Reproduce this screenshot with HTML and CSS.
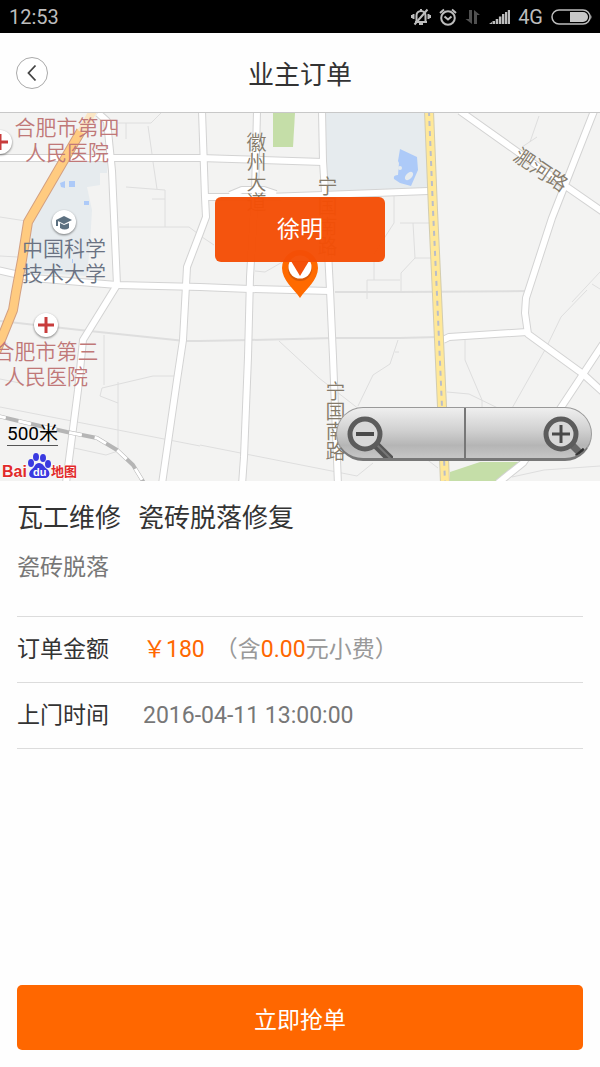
FILE: index.html
```
<!DOCTYPE html>
<html lang="zh-CN">
<head>
    <meta charset="UTF-8">
    <meta name="viewport" content="width=device-width, initial-scale=1.0">
    <title>业主订单</title>
    <link rel="stylesheet" href="styles.css">
</head>
<body>
    <div class="status-bar">
        <span class="status-time">12:53</span>
        <div class="status-icons">
            <svg class="icon-bell" width="20" height="18" viewBox="0 0 20 18" fill="none" stroke="#bdbdbd" stroke-width="2">
                <path d="M4 14h12M5.500 13.500V7.500a4.500 4.500 0 0 1 9 0v6M8 16h4M10 1v2"/>
                <path d="M2.500 6v5M.800 7v3M17.500 6v5M19.200 7v3M3.500 16.500L16.500 1.500"/>
            </svg>
            <svg class="icon-alarm" width="18" height="18" viewBox="0 0 18 18" fill="none" stroke="#bdbdbd" stroke-width="2">
                <circle cx="9" cy="10" r="6.800"/>
                <path d="M5.500 8.500L9 11.500l3.500-3M1 5l4-3.500M17 5l-4-3.500"/>
            </svg>
            <svg class="icon-data" width="16" height="16" viewBox="0 0 16 16" fill="#505050">
                <path d="M4 1h3v14L.500 10H4zM9 15V1l6 5h-3v9z"/>
            </svg>
            <svg class="icon-signal" width="21" height="16" viewBox="0 0 21 16" fill="#bdbdbd">
                <path d="M0 15l3-2v2zM3.500 12H6v3H3.500zM6.700 10h2.500v5H6.700zM9.900 7.500h2.500V15H9.900zM13 5h2.400v10H13zM16 3h2.200v12H16zM18.800 1H21v14h-2.200z"/>
            </svg>
            <span>4G</span>
            <svg class="icon-battery" width="41" height="16" viewBox="0 0 41 16">
                <rect x="1" y="1" width="38" height="14" rx="7" fill="none" stroke="#bdbdbd" stroke-width="1.500"/>
                <path d="M19 3h13a5 5 0 0 1 0 10H19z" fill="#c8c8c8"/>
                <path d="M39.500 5.500a4 4 0 0 1 0 5z" fill="#bdbdbd"/>
            </svg>
        </div>
    </div>

    <header class="header">
        <button class="back-button" type="button" aria-label="返回">
            <svg width="10" height="18" viewBox="0 0 10 18" fill="none" stroke="#444" stroke-width="1.800">
                <path d="M8.500 1.500L1.500 9l7 7.500"/>
            </svg>
        </button>
        <h1 class="header-title">业主订单</h1>
    </header>

    <div class="map">
        <svg class="map-canvas" viewBox="0 0 600 368">
            <!-- areas -->
            <path class="campus" d="M67 49h40v11h-7v12l-13 2 5 23-2 34-3 32-30-2-39-1 14-50z"/>
            <path class="campus" d="M325 0h101l2 77-101 3z"/>
            <path class="park" d="M273 0h22l-2 34h-20z"/>
            <path class="park" d="M450 359l30-10h41l-14 12-8 7h-49z"/>
            <path class="water" d="M400 36l17 8 1 13-7 16-11-3-6-4q-1-4 4-4l1-12-1-2zM60 70l5-2v7l-4-1zM69 68h6v6h-6zM84 88h5v4h-5zM72 146h1v4h-1z"/>
            <ellipse class="campus" cx="409" cy="63" rx="5" ry="3" transform="rotate(-45 409 63)"/>
            <circle class="campus" cx="400" cy="55" r="2"/>

            <!-- lanes -->
            <g class="lane">
                <path d="M118 10h33l10-10M126 10v16M148 13l4 28M153 49l4 27M126 74l39 3v37M152 86h13M119 114h70l8 6M0 104l26 4M0 143l18 1"/>
                <path d="M104 222v50M0 229l8 2M0 266l20 4M0 294l200 39M102 275l51-12h24M102 275l-2 8 18 7M118 269v69l-12 4-32-7"/>
                <path d="M200 332l157 31 16-13M279 228l40 37 45 35M358 293l15-31 17-11 8-24M395 239h4M255 158l10 1 21-12M202 124l12 8"/>
                <path d="M400 110h30M413 110l2 35h16M415 145l-14 15v19M367 186v-19h33M374 167v-26l20-31V82M537 24l-15 10M530 29l9-26"/>
                <path d="M600 159l-28 30M592 171l8 5M587 177l-26 27-15 31-35 62M465 227v20l17 40v8M447 279l22 2 35 17M512 364l32-7 56-4M425 345l13 10"/>
            </g>
            <g class="lane lane-wide">
                <path d="M0 208l80 9 105 11h15l50-1 83-2h67l38-1M335 179h65l128-1"/>
            </g>

            <!-- street outlines, then their white filling -->
            <g class="street-edge">
                <path id="st1" d="M-3 45h203l123 4M-3 157l36 8 47 4 37 3 83 2 50 2 80 2"/>
                <path id="st2" d="M98 0l9 8 5 50 5 114-34 55-5 50-12 93"/>
                <path id="st3" d="M202-2l3 86 1 20-6 16-13 34-4 73-6 40-15 104"/>
                <path id="st4" d="M257-2l-2 82-5 84-2 80-4 100-2 28"/>
                <path id="st5" d="M322-2l1 50 2 32 5 97 3 67 5 128"/>
                <path id="st6" d="M205 84h62l56-2 105-4M230 82l12-5h22l12 4"/>
                <path id="st7" d="M460-2l107 76 36 25M594-2l-31 79-11 28-26 80-1 15 3 21 55 40 22 20"/>
                <path id="st8" d="M443 227l6-3 78-5M603 231l-43 65-37 54-25 20"/>
            </g>
            <g class="street">
                <use href="#st1"/><use href="#st2"/><use href="#st3"/><use href="#st4"/>
                <use href="#st5"/><use href="#st6"/><use href="#st7"/><use href="#st8"/>
            </g>

            <!-- railway -->
            <path class="rail-edge" d="M-2 303l29 7 40 9 30 6 20 12 16 15 11 18"/>
            <path class="rail" d="M-2 303l29 7 40 9 30 6 20 12 16 15 11 18"/>

            <!-- main roads -->
            <path class="main-edge" d="M81 18L28 109l-6 38-6 32-3 18-17 42"/>
            <path class="main" d="M81 18L28 109l-6 38-6 32-3 18-17 42"/>
            <path class="main-far" d="M93-2L81 19"/>
            <path class="metro-edge" d="M429-2l4 99 4 85 5 112 3 76"/>
            <path class="metro" d="M429-2l4 99 4 85 5 112 3 76"/>
            <path class="metro-line" d="M429-2l4 99 4 85 5 112 3 76"/>

            <!-- places -->
            <g class="place-dot">
                <circle cx="0" cy="29" r="12"/>
                <circle cx="46" cy="212" r="12"/>
                <circle cx="64" cy="109" r="12"/>
            </g>
            <path class="cross" d="M-8 29H8M0 21v16M38 212h16M46 204v16"/>
            <path class="cap" d="M56 107l8-4 8 4-8 4zM60 110l4 2 5-2v5q-4 3-9 0zM56 107h2v6h-2z"/>
            <g class="label hospital">
                <text x="67" y="22">合肥市第四</text>
                <text x="67" y="47">人民医院</text>
                <text x="46" y="246">合肥市第三</text>
                <text x="46" y="271">人民医院</text>
            </g>
            <g class="label school">
                <text x="64" y="143">中国科学</text>
                <text x="64" y="168">技术大学</text>
            </g>
            <g class="road-name">
                <text class="vertical" x="255" y="19">徽州大道</text>
                <text class="vertical" x="326" y="63">宁国南路</text>
                <text class="vertical" x="334" y="268">宁国南路</text>
                <text transform="translate(512 46) rotate(34)">淝河路</text>
            </g>

            <!-- map provider -->
            <g class="provider">
                <text x="2" y="364">Bai</text>
                <text class="provider-cn" x="51" y="363">地图</text>
                <g class="paw">
                    <ellipse cx="31" cy="350" rx="3" ry="4"/>
                    <ellipse cx="36" cy="344" rx="3" ry="4"/>
                    <ellipse cx="43" cy="345" rx="3" ry="4"/>
                    <ellipse cx="48" cy="351" rx="3" ry="4"/>
                    <path d="M39 350c4 0 5 4 8 6 4 3 3 9-2 9H34c-6 0-6-6-2-9 3-2 3-6 7-6z"/>
                </g>
                <text class="provider-du" x="33" y="363">du</text>
            </g>
        </svg>

        <span class="map-scale">500米</span>

        <div class="marker">
            <div class="marker-name">徐明</div>
            <svg class="marker-pin" width="36" height="48" viewBox="0 0 36 48">
                <path fill="#ff6a00" d="M18 48C12 39 0 30 0 18a18 18 0 0 1 36 0c0 12-12 21-18 30z"/>
                <circle cx="18" cy="19" r="12" fill="#d95a08"/>
                <circle cx="18" cy="17" r="11.500" fill="#fff"/>
                <path fill="#f4510b" d="M9 11h18l-9 15z"/>
            </svg>
        </div>

        <div class="zoom">
            <button class="zoom-button" type="button" aria-label="缩小">
                <svg width="56" height="50" viewBox="0 0 56 50" fill="none">
                    <path d="M38 36l18 18" stroke="#555" stroke-width="8"/>
                    <path d="M40 37l16 16" stroke="#777" stroke-width="2"/>
                    <circle cx="28" cy="26" r="15" fill="#d8d8d8" stroke="#5c5c5c" stroke-width="5"/>
                    <path d="M19 26h18" stroke="#4a4a4a" stroke-width="4"/>
                </svg>
            </button>
            <button class="zoom-button zoom-in" type="button" aria-label="放大">
                <svg width="56" height="50" viewBox="0 0 56 50" fill="none">
                    <path d="M36 36l10 10" stroke="#666" stroke-width="7"/>
                    <path d="M41 48l8-7" stroke="#333" stroke-width="3"/>
                    <circle cx="26" cy="26" r="15" fill="#d8d8d8" stroke="#5c5c5c" stroke-width="5"/>
                    <path d="M17 26h18M26 17v18" stroke="#4a4a4a" stroke-width="3"/>
                </svg>
            </button>
        </div>
    </div>

    <main class="order">
        <h2 class="order-title"><span>瓦工维修</span><span>瓷砖脱落修复</span></h2>
        <p class="order-note">瓷砖脱落</p>
        <dl class="order-info">
            <div class="info-row">
                <dt>订单金额</dt>
                <dd><span class="price">￥180</span><span class="tip">（含<b>0.00</b>元小费）</span></dd>
            </div>
            <div class="info-row">
                <dt>上门时间</dt>
                <dd>2016-04-11 13:00:00</dd>
            </div>
        </dl>
    </main>

    <footer class="footer">
        <button class="grab-button" type="button">立即抢单</button>
    </footer>
</body>
</html>
```
FILE: styles.css
```
:root {
    --orange: #ff6700;
    --line: #dcdcdc;
    --text: #333;
    --muted: #777;
}

* {
    box-sizing: border-box;
}

body {
    margin: 0;
    min-height: 100vh;
    display: flex;
    flex-direction: column;
    background: #fefefe;
    color: var(--text);
    font-family: Roboto, "Noto Sans CJK SC", sans-serif;
    font-size: 23px;
}

button {
    padding: 0;
    border: none;
    font: inherit;
    cursor: pointer;
}

h1, h2, p, dl, dd {
    margin: 0;
    font-weight: 400;
}

svg {
    display: block;
}

/* status bar */
.status-bar {
    display: flex;
    justify-content: space-between;
    align-items: center;
    height: 33px;
    padding: 0 8px 0 9px;
    background: #000;
    color: #bdbdbd;
    font-size: 20px;
}

.status-icons {
    display: flex;
    align-items: center;
    gap: 8px;
}

/* header */
.header {
    display: grid;
    grid-template-columns: 32px 1fr 32px;
    align-items: center;
    height: 80px;
    padding: 0 16px;
    border-bottom: 1px solid #c8c8c8;
}

.back-button {
    display: flex;
    justify-content: center;
    align-items: center;
    width: 32px;
    height: 32px;
    border: 1px solid #aaa;
    border-radius: 50%;
    background: #fff;
}

.header-title {
    font-size: 26px;
    text-align: center;
}

/* map */
.map {
    position: relative;
    overflow: hidden;
    background: #f3f3f2;
}

.map-canvas {
    width: 100%;
    height: auto;
}

.campus { fill: #e6ebee; }
.park { fill: #c5dea8; }
.water { fill: #adcaf8; }

.lane,
.street-edge,
.street {
    fill: none;
    stroke-linejoin: round;
}

.lane { stroke: #dedede; }
.lane-wide { stroke-width: 2; }

.street-edge {
    stroke: #d3d3d3;
    stroke-width: 8;
}

.street {
    stroke: #fff;
    stroke-width: 6;
}

.rail-edge,
.rail,
.main-edge,
.main,
.main-far,
.metro-edge,
.metro,
.metro-line {
    fill: none;
    stroke-linejoin: round;
}

.rail-edge { stroke: #b5b5b5; stroke-width: 4; }
.rail { stroke: #fff; stroke-width: 3; stroke-dasharray: 13; stroke-dashoffset: 5; }
.main-edge { stroke: #d3a080; stroke-width: 10; }
.main { stroke: #ffcb80; stroke-width: 8; }
.main-far { stroke: #fbe6c4; stroke-width: 8; }
.metro-edge { stroke: #d2ccb0; stroke-width: 10; }
.metro { stroke: #ffe898; stroke-width: 8; }
.metro-line { stroke: #b9bdc9; stroke-width: 2; stroke-dasharray: 5; }

.place-dot {
    fill: #fff;
    filter: drop-shadow(0 1px 1px rgba(0, 0, 0, 0.5));
}

.cross { stroke: #c83c3c; stroke-width: 3; }
.cap { fill: #5c7080; }

.label {
    font-size: 21px;
    font-weight: 350;
    text-anchor: middle;
}

.hospital { fill: #c07878; }
.school { fill: #6a7282; }

.road-name {
    fill: #857b6b;
    font-size: 20px;
    font-weight: 350;
}

.vertical {
    writing-mode: vertical-rl;
}

.provider {
    fill: #e12a2a;
    stroke: #fff;
    stroke-width: 1px;
    paint-order: stroke;
    font-family: "Liberation Sans", "Noto Sans CJK SC", sans-serif;
    font-size: 16px;
    font-weight: 700;
}

.provider-cn { font-size: 13px; }
.paw { fill: #3a3ae0; }
.provider-du { fill: #fff; stroke: none; font-size: 11px; }

.map-scale {
    position: absolute;
    left: 7px;
    bottom: 35px;
    border-bottom: 1px solid #555;
    color: #000;
    font-size: 19px;
    line-height: 22px;
}

.marker {
    position: absolute;
    top: 84px;
    left: 0;
    right: 0;
    display: flex;
    flex-direction: column;
    align-items: center;
}

.marker-name {
    z-index: 1;
    padding: 0 62px;
    border-radius: 6px;
    background: rgba(244, 78, 6, 0.97);
    color: #fff;
    line-height: 65px;
}

/* the pin tucks under the name plate */
.marker-pin {
    margin-top: -12px;
}

.zoom {
    position: absolute;
    right: 8px;
    bottom: 20px;
    display: flex;
    border: 1px solid #999;
    border-bottom: 3px solid #777;
    border-radius: 27px;
    background: linear-gradient(#efefef, #d0d0d0 45%, #b5b5b5 75%, #c6c6c6);
    overflow: hidden;
}

.zoom-button {
    display: flex;
    width: 127px;
    height: 50px;
    background: none;
}

.zoom-in {
    justify-content: flex-end;
    border-left: 2px solid #777;
}

/* order */
.order {
    padding: 17px;
}

.order-title {
    display: flex;
    gap: 17px;
    font-size: 26px;
    line-height: 40px;
}

.order-note {
    padding: 10px 0 29px;
    border-bottom: 1px solid var(--line);
    color: var(--muted);
    line-height: 39px;
}

.info-row {
    display: flex;
    align-items: baseline;
    border-bottom: 1px solid var(--line);
    line-height: 65px;
}

.info-row dt {
    width: 126px;
}

.info-row dd {
    display: flex;
    gap: 10px;
    color: var(--muted);
}

.price,
.tip b {
    color: var(--orange);
    font-weight: 400;
}

.tip {
    color: #999;
}

/* footer */
.footer {
    margin-top: auto;
    padding: 17px;
}

.grab-button {
    width: 100%;
    height: 65px;
    border-radius: 5px;
    background: var(--orange);
    color: #fff;
}
```
